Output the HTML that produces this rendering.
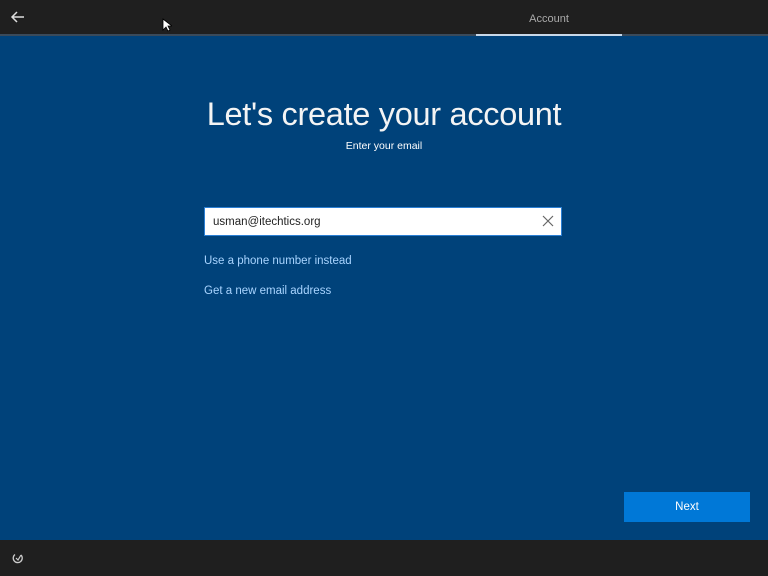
<!DOCTYPE html>
<html><head><style>
body{margin:0;width:768px;height:576px;overflow:hidden;background:#00427a;font-family:"Liberation Sans",sans-serif;position:relative}
.top{position:absolute;left:0;top:0;width:768px;height:34px;background:#1f1f1f;border-bottom:2px solid #3a4a5a}
.acc{position:absolute;left:476px;top:1px;width:146px;height:34px;text-align:center;line-height:36px;font-size:11px;color:#aaa}
.ul{position:absolute;left:476px;top:34px;width:146px;height:2px;background:#c8d8e8}
.bot{position:absolute;left:0;top:540px;width:768px;height:36px;background:#1f1f1f}
h1{position:absolute;left:0;width:768px;top:96px;margin:0;text-align:center;font-weight:300;font-size:32.5px;color:#f4f4f4;letter-spacing:-0.3px}
.sub{position:absolute;left:0;width:768px;top:140px;text-align:center;font-size:10.5px;color:#fff}
.inp{position:absolute;left:204px;top:207px;width:356px;height:27px;background:#fff;border:1.5px solid #2b7fd4}
.inp span{position:absolute;left:8px;top:8px;font-size:11.5px;color:#222}
.link{position:absolute;left:204px;font-size:11.5px;color:#a8d4ff}
.next{position:absolute;left:624px;top:492px;width:126px;height:30px;background:#0078d7;color:#fff;font-size:11.5px;text-align:center;line-height:31px}
</style></head><body>
<div class="top"></div>
<svg style="position:absolute;left:10px;top:10px" width="16" height="14" viewBox="0 0 16 14"><path d="M14 7H2M7 2L2 7l5 5" fill="none" stroke="#ddd" stroke-width="1.5"/></svg>
<svg style="position:absolute;left:162px;top:18px" width="10" height="15" viewBox="0 0 10 15"><path d="M1 1v11l3-3 2 4 2-1-2-4h4z" fill="#fff" stroke="#000" stroke-width="0.8"/></svg>
<div class="acc">Account</div><div class="ul"></div>
<h1>Let's create your account</h1>
<div class="sub">Enter your email</div>
<div class="inp"><span>usman@itechtics.org</span>
<svg style="position:absolute;left:337px;top:7px" width="12" height="12" viewBox="0 0 12 12"><path d="M1 1l10 10M11 1L1 11" stroke="#666" stroke-width="1.2"/></svg></div>
<div class="link" style="top:255px">Use a phone number instead</div>
<div class="link" style="top:285px">Get a new email address</div>
<div class="next">Next</div>
<div class="bot"></div>
<svg style="position:absolute;left:11px;top:551px" width="14" height="14" viewBox="0 0 14 14"><path d="M4 3.5A4.5 4.5 0 1 0 10 4" fill="none" stroke="#ccc" stroke-width="1.3"/><path d="M5 7l2 2 3-5" fill="none" stroke="#ccc" stroke-width="1.2"/></svg>
</body></html>
